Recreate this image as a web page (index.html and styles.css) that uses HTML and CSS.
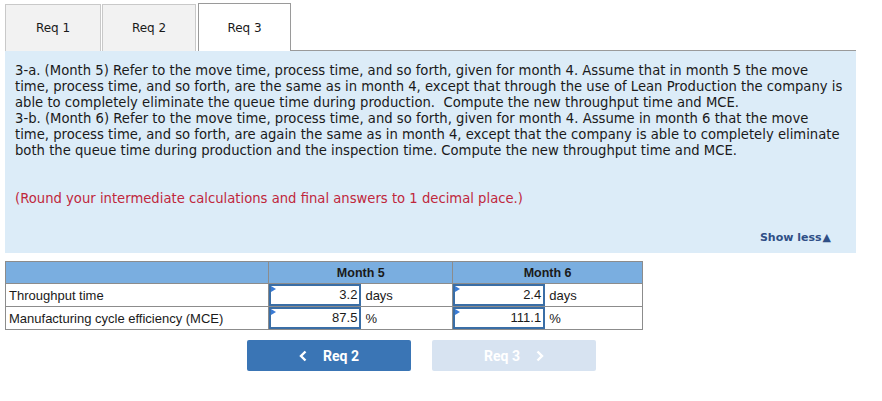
FILE: index.html
```html
<!DOCTYPE html>
<html>
<head>
<meta charset="utf-8">
<link rel="stylesheet" href="styles.css">
</head>
<body>
<div class="page">
  <div class="tabs">
    <div class="tab">Req 1</div>
    <div class="tab">Req 2</div>
    <div class="tab active">Req 3</div>
    <div class="tab-fill"></div>
  </div>
  <div class="panel">
    <p class="q">3-a. (Month 5) Refer to the move time, process time, and so forth, given for month 4. Assume that in month 5 the move time, process time, and so forth, are the same as in month 4, except that through the use of Lean Production the company is able to completely eliminate the queue time during production.&nbsp; Compute the new throughput time and MCE.<br>3-b. (Month 6) Refer to the move time, process time, and so forth, given for month 4. Assume in month 6 that the move time, process time, and so forth, are again the same as in month 4, except that the company is able to completely eliminate both the queue time during production and the inspection time. Compute the new throughput time and MCE.</p>
    <p class="note">(Round your intermediate calculations and final answers to 1 decimal place.)</p>
    <div class="showless">Show less<span class="tri">&#9650;</span></div>
  </div>
  <table class="grid">
    <colgroup>
      <col class="c1"><col class="c2"><col class="c3">
    </colgroup>
    <thead>
      <tr><th></th><th>Month 5</th><th>Month 6</th></tr>
    </thead>
    <tbody>
      <tr>
        <td class="label">Throughput time</td>
        <td><div class="cell"><span class="inp">3.2</span><span class="unit">days</span></div></td>
        <td><div class="cell"><span class="inp">2.4</span><span class="unit">days</span></div></td>
      </tr>
      <tr>
        <td class="label">Manufacturing cycle efficiency (MCE)</td>
        <td><div class="cell"><span class="inp">87.5</span><span class="unit">%</span></div></td>
        <td><div class="cell"><span class="inp">111.1</span><span class="unit">%</span></div></td>
      </tr>
    </tbody>
  </table>
  <div class="nav">
    <div class="btn prev"><svg class="chev" width="8" height="12" viewBox="0 0 8 12"><path d="M6.5 1.5 L2 6 L6.5 10.5" fill="none" stroke="#fff" stroke-width="2.4"/></svg>Req 2</div>
    <div class="btn next disabled">Req 3<svg class="chev r" width="8" height="12" viewBox="0 0 8 12"><path d="M1.5 1.5 L6 6 L1.5 10.5" fill="none" stroke="#fff" stroke-width="2.4"/></svg></div>
  </div>
</div>
</body>
</html>
```
FILE: styles.css
```css
html, body { margin: 0; padding: 0; background: #fff; }
.page { padding: 3px 0 0 5px; width: 851px; }
.tabs { display: flex; align-items: flex-end; height: 48px; }
.tab {
  box-sizing: border-box;
  height: 47px;
  width: 96px;
  margin-right: 1px;
  background: #f2f2f2;
  border: 1px solid #c9c9c9;
  border-bottom: none;
  display: flex; align-items: center; justify-content: center;
  font-family: "DejaVu Sans", Verdana, sans-serif;
  font-size: 12px; color: #1a1a1a;
}
.tab:nth-child(2) { width: 94px; margin-right: 2px; }
.tab.active {
  background: #fff; border: 1px solid #9a9a9a; border-bottom: none;
  height: 48px; width: 93px; margin-right: 0;
}
.tab-fill { flex: 1; border-bottom: 1px solid #9a9a9a; height: 0; }
.panel {
  background: #dcecf8;
  height: 202px;
  padding: 12px 10px 0 10px;
  box-sizing: border-box;
  position: relative;
  font-family: "DejaVu Sans", Verdana, sans-serif;
  font-size: 13.2px;
  line-height: 16px;
  color: #1a1a1a;
}
.q { margin: 0; }
.note { margin: 32px 0 0 0; color: #c0273c; }
.showless {
  position: absolute; right: 25px; top: 179px;
  font-family: "DejaVu Sans", Verdana, sans-serif;
  font-weight: bold; font-size: 11px; color: #2f4f86;
}
.tri { font-size: 11px; margin-left: 1px; }
.grid {
  margin-top: 8px;
  border-collapse: collapse;
  width: 638px;
  font-family: "Liberation Sans", Arial, sans-serif;
  font-size: 13px;
  color: #1a1a1a;
}
.c1 { width: 264px; } .c2 { width: 184px; } .c3 { width: 190px; }
.grid th, .grid td { border: 1px solid #8c8c8c; padding: 0; }
.grid th { background: #7aaee0; height: 21px; font-weight: bold; font-size: 12.5px; }
.grid td { height: 22px; }
.grid td.label { padding-left: 3px; }
.cell { display: flex; align-items: center; height: 22px; }
.inp {
  position: relative;
  box-sizing: border-box;
  width: 92px; height: 22px;
  border: 2px solid #3a6ea6;
  text-align: right; padding-right: 2px;
  line-height: 18px;
  background: #fff;
}
.inp::before {
  content: ""; position: absolute; left: 0; top: 0;
  border-left: 5px solid #3a7bd5; border-top: 3px solid transparent; border-bottom: 3px solid transparent;
}
.unit { padding-left: 4px; }
.nav { display: flex; gap: 21px; margin: 10px 0 0 242px; }
.btn {
  width: 164px; height: 31px; border-radius: 2px;
  display: flex; align-items: center; justify-content: center;
  font-family: Roboto, "Liberation Sans", sans-serif; font-weight: bold; font-size: 14px;
  color: #fff; background: #3a75b5;
}
.btn.disabled { background: #d7e3f1; }
.chev { margin-right: 16px; }
.chev.r { margin-right: 0; margin-left: 16px; }
```
